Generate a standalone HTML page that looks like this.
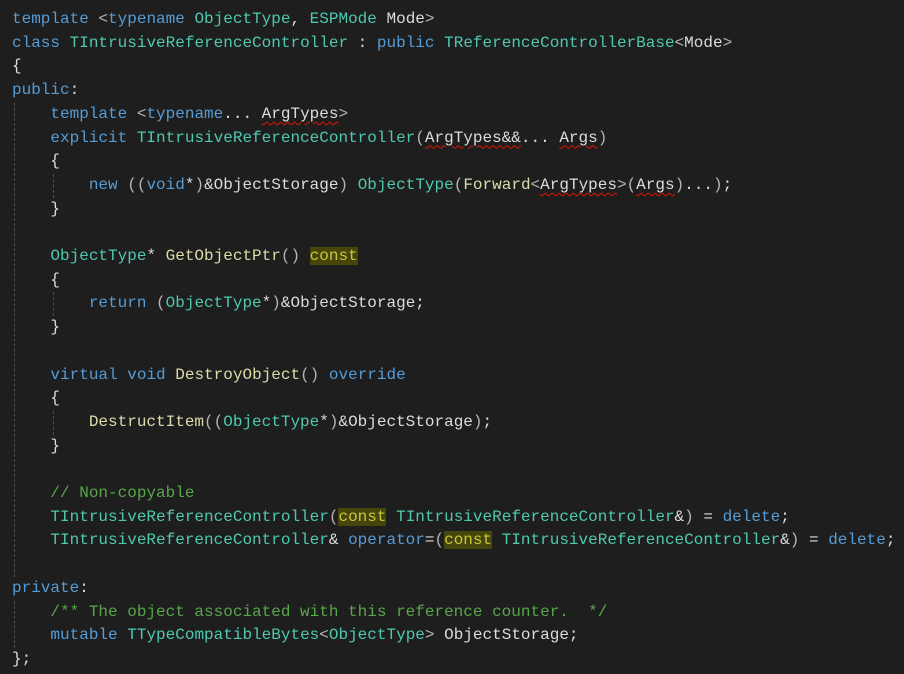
<!DOCTYPE html>
<html><head><meta charset="utf-8"><style>
html,body{margin:0;padding:0;background:#1e1e1e;width:904px;height:674px;overflow:hidden}
#c{position:absolute;left:12px;top:8px;font-family:"Liberation Mono",monospace;font-size:16px;line-height:23.7px;color:#dcdcdc;white-space:pre}
.k{color:#569cd6}.t{color:#4ec9b0}.f{color:#dcdcaa}.c{color:#57a64a}.p{color:#b4b4b4}
.h{background:#45450c;color:#c8c83a}
.s{text-decoration:underline wavy #e51400;text-decoration-thickness:1px;text-underline-offset:3px}
.g{position:absolute;width:0;border-left:1px dashed #4f4f4f}
</style></head><body>
<div class="g" style="left:14px;top:103px;height:474px"></div>
<div class="g" style="left:14px;top:601px;height:47px"></div>
<div class="g" style="left:53px;top:174px;height:24px"></div>
<div class="g" style="left:53px;top:292px;height:24px"></div>
<div class="g" style="left:53px;top:411px;height:24px"></div>
<div id="c"><span class="k">template</span> <span class="p">&lt;</span><span class="k">typename</span> <span class="t">ObjectType</span>, <span class="t">ESPMode</span> Mode<span class="p">&gt;</span>
<span class="k">class</span> <span class="t">TIntrusiveReferenceController</span> : <span class="k">public</span> <span class="t">TReferenceControllerBase</span><span class="p">&lt;</span>Mode<span class="p">&gt;</span>
{
<span class="k">public</span>:
    <span class="k">template</span> <span class="p">&lt;</span><span class="k">typename</span>... <span class="s">ArgTypes</span><span class="p">&gt;</span>
    <span class="k">explicit</span> <span class="t">TIntrusiveReferenceController</span><span class="p">(</span><span class="s">ArgTypes&amp;&amp;</span>... <span class="s">Args</span><span class="p">)</span>
    {
        <span class="k">new</span> <span class="p">((</span><span class="k">void</span>*<span class="p">)</span>&amp;ObjectStorage<span class="p">)</span> <span class="t">ObjectType</span><span class="p">(</span><span class="f">Forward</span><span class="p">&lt;</span><span class="s">ArgTypes</span><span class="p">&gt;(</span><span class="s">Args</span><span class="p">)</span>...<span class="p">)</span>;
    }

    <span class="t">ObjectType</span>* <span class="f">GetObjectPtr</span><span class="p">()</span> <span class="h">const</span>
    {
        <span class="k">return</span> <span class="p">(</span><span class="t">ObjectType</span>*<span class="p">)</span>&amp;ObjectStorage;
    }

    <span class="k">virtual</span> <span class="k">void</span> <span class="f">DestroyObject</span><span class="p">()</span> <span class="k">override</span>
    {
        <span class="f">DestructItem</span><span class="p">((</span><span class="t">ObjectType</span>*<span class="p">)</span>&amp;ObjectStorage<span class="p">)</span>;
    }

    <span class="c">// Non-copyable</span>
    <span class="t">TIntrusiveReferenceController</span><span class="p">(</span><span class="h">const</span> <span class="t">TIntrusiveReferenceController</span>&amp;<span class="p">)</span> = <span class="k">delete</span>;
    <span class="t">TIntrusiveReferenceController</span>&amp; <span class="k">operator</span>=<span class="p">(</span><span class="h">const</span> <span class="t">TIntrusiveReferenceController</span>&amp;<span class="p">)</span> = <span class="k">delete</span>;

<span class="k">private</span>:
    <span class="c">/** The object associated with this reference counter.  */</span>
    <span class="k">mutable</span> <span class="t">TTypeCompatibleBytes</span><span class="p">&lt;</span><span class="t">ObjectType</span><span class="p">&gt;</span> ObjectStorage;
};</div>
</body></html>
